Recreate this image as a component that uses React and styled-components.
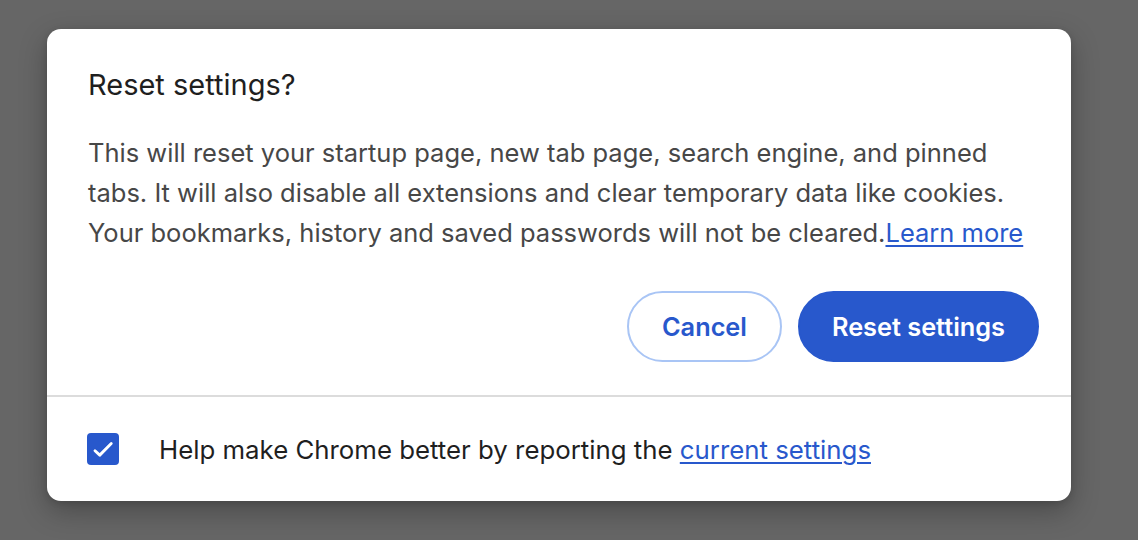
import styled, { createGlobalStyle } from 'styled-components';

const GlobalStyle = createGlobalStyle`
  html, body {
    margin: 0;
    padding: 0;
    background: #666666;
  }
  body {
    font-family: Inter, "Noto Sans", Roboto, sans-serif;
    -webkit-font-smoothing: antialiased;
  }
`;

const Page = styled.div`
  height: 540px;
  padding: 29px 0 0 47px;
  box-sizing: border-box;
`;

const Dialog = styled.div`
  width: 1024px;
  background: #ffffff;
  border-radius: 14px;
  box-shadow: 0 10px 28px rgba(0, 0, 0, 0.28), 0 2px 6px rgba(0, 0, 0, 0.12);
  overflow: hidden;
`;

const Body = styled.div`
  padding: 40px 32px 33px 41px;
`;

const Title = styled.h2`
  margin: 0;
  font-size: 29px;
  line-height: 32px;
  font-weight: 400;
  color: #1f1f1f;
`;

const Description = styled.p`
  margin: 32px 0 0;
  font-size: 25.5px;
  line-height: 40px;
  color: #474747;
`;

const Link = styled.a`
  color: #2858cc;
  text-decoration: underline;
  text-underline-offset: 3px;
  text-decoration-thickness: 2px;
  cursor: pointer;
`;

const Actions = styled.div`
  display: flex;
  justify-content: flex-end;
  gap: 16px;
  margin-top: 38px;
`;

const Button = styled.button`
  height: 71px;
  padding: 0 ${({ $primary }) => ($primary ? '32px' : '33px')};
  border-radius: 36px;
  font-family: inherit;
  font-size: 25.3px;
  font-weight: 600;
  cursor: pointer;
  border: 2px solid ${({ $primary }) => ($primary ? '#2858cc' : '#a9c5f5')};
  background: ${({ $primary }) => ($primary ? '#2858cc' : '#ffffff')};
  color: ${({ $primary }) => ($primary ? '#ffffff' : '#2858cc')};
`;

const Divider = styled.hr`
  margin: 0;
  border: none;
  border-top: 2px solid #dcdcdc;
`;

const Footer = styled.label`
  display: flex;
  align-items: center;
  gap: 40px;
  height: 104px;
  padding: 0 40px;
  font-size: 25.8px;
  color: #1f1f1f;
`;

const Checkbox = styled.span`
  flex: none;
  display: flex;
  align-items: center;
  justify-content: center;
  width: 32px;
  height: 32px;
  border-radius: 4px;
  background: #2858cc;
`;

const CheckIcon = () => (
  <svg width="30" height="30" viewBox="0 0 24 24" fill="none">
    <path d="M5.6 13.4l3.8 3.5L18.6 7.6" stroke="#ffffff" strokeWidth="2.3" strokeLinecap="round" strokeLinejoin="round" />
  </svg>
);

export default function App() {
  return (
    <>
      <GlobalStyle />
      <Page>
        <Dialog>
          <Body>
            <Title>Reset settings?</Title>
            <Description>
              This will reset your startup page, new tab page, search engine, and pinned
              <br />
              tabs. It will also disable all extensions and clear temporary data like cookies.
              <br />
              Your bookmarks, history and saved passwords will not be cleared.<Link>Learn more</Link>
            </Description>
            <Actions>
              <Button>Cancel</Button>
              <Button $primary>Reset settings</Button>
            </Actions>
          </Body>
          <Divider />
          <Footer>
            <Checkbox>
              <CheckIcon />
            </Checkbox>
            <span>
              Help make Chrome better by reporting the <Link>current settings</Link>
            </span>
          </Footer>
        </Dialog>
      </Page>
    </>
  );
}
